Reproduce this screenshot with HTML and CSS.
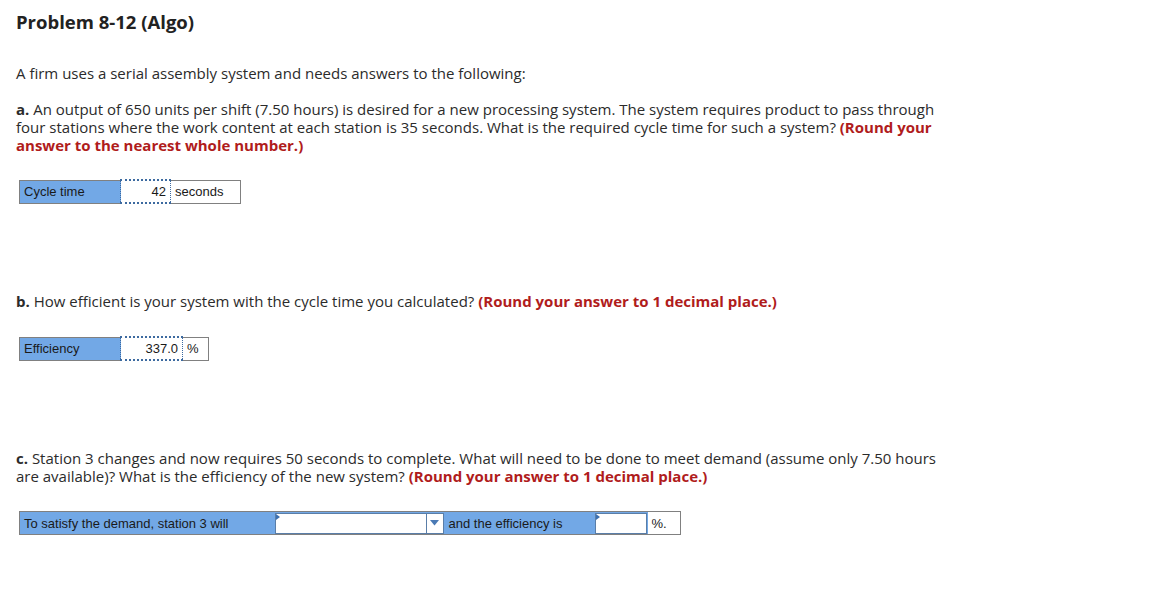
FILE: index.html
```html
<!DOCTYPE html>
<html>
<head>
<meta charset="utf-8">
<link rel="stylesheet" href="styles.css">
</head>
<body>
<div class="page">
  <h1 class="title">Problem 8-12 (Algo)</h1>
  <p class="intro">A firm uses a serial assembly system and needs answers to the following:</p>
  <p class="q q-a"><b>a.</b> An output of 650 units per shift (7.50 hours) is desired for a new processing system. The system requires product to pass through four stations where the work content at each station is 35 seconds. What is the required cycle time for such a system? <span class="hint">(Round your answer to the nearest whole number.)</span></p>
  <table class="ans ans-a">
    <tr>
      <td class="lbl w-cycle">Cycle time</td>
      <td class="val w-val42">42</td>
      <td class="unit w-sec">seconds</td>
    </tr>
  </table>
  <p class="q q-b"><b>b.</b> How efficient is your system with the cycle time you calculated? <span class="hint">(Round your answer to 1 decimal place.)</span></p>
  <table class="ans ans-b">
    <tr>
      <td class="lbl w-cycle">Efficiency</td>
      <td class="val w-val337">337.0</td>
      <td class="unit w-pct">%</td>
    </tr>
  </table>
  <p class="q q-c"><b>c.</b> Station 3 changes and now requires 50 seconds to complete. What will need to be done to meet demand (assume only 7.50 hours are available)? What is the efficiency of the new system? <span class="hint">(Round your answer to 1 decimal place.)</span></p>
  <table class="ans ans-c">
    <tr>
      <td class="lbl w-sat">To satisfy the demand, station 3 will</td>
      <td class="sel w-sel"><div class="sel-box"><span class="flag"></span><span class="arrow"><svg width="9" height="6" viewBox="0 0 9 6"><path d="M0 0 H9 L4.5 5.5 Z" fill="#4a7ab5"/></svg></span></div></td>
      <td class="lbl w-and">and the efficiency is</td>
      <td class="inp w-inp"><div class="inp-box"><span class="flag"></span></div></td>
      <td class="unit w-pct2">%.</td>
    </tr>
  </table>
</div>
</body>
</html>
```
FILE: styles.css
```css
html, body { margin: 0; padding: 0; background: #fff; }
.page {
  padding: 0 16px;
  font-family: "Open Sans", "Noto Sans", sans-serif;
  color: #2b2b2b;
}
.title {
  margin: 0;
  padding-top: 10px;
  font-size: 18.5px;
  line-height: 24px;
  font-weight: 700;
  color: #222;
}
.intro {
  margin: 30px 0 0;
  font-size: 15px;
  line-height: 18px;
}
.q {
  margin: 0;
  font-size: 15px;
  line-height: 18px;
  max-width: 930px;
}
.q b { font-weight: 700; }
.q-a { margin-top: 18px; }
.q-b { margin-top: 88px; }
.q-c { margin-top: 88px; }
.hint { color: #b01c1c; font-weight: 700; }

.ans {
  border-collapse: collapse;
  margin-left: 3px;
  font-family: "Liberation Sans", Arial, sans-serif;
  font-size: 13px;
  color: #1a1a1a;
}
.ans td {
  border-top: 1px solid #808080;
  border-bottom: 1px solid #808080;
  height: 23px;
  padding: 0 4px;
  line-height: 21px;
  box-sizing: border-box;
}
.ans td:first-child { border-left: 1px solid #808080; }
.ans td:last-child { border-right: 1px solid #808080; }
.ans-a { margin-top: 25px; }
.ans-b { margin-top: 26px; }
.ans-c { margin-top: 26px; }
.lbl { background: #72a8e6; }
.val {
  background: #fff;
  text-align: right;
  border-left: 1px dotted #3d6aa0 !important;
  border-right: 1px dotted #3d6aa0 !important;
  border-top: 2px dotted #3d6aa0 !important;
  border-bottom: 2px dotted #3d6aa0 !important;
}
.unit { background: #fff; }
.w-cycle { width: 101px; min-width: 101px; }
.w-val42 { width: 50px; min-width: 50px; }
.w-sec { width: 70px; min-width: 70px; }
.w-val337 { width: 62px; min-width: 62px; }
.w-pct { width: 26px; min-width: 26px; }
.w-sat { width: 254px; min-width: 254px; }
.w-sel { width: 171px; min-width: 171px; padding: 0 !important; background: #72a8e6; }
.w-and { width: 150px; min-width: 150px; }
.w-inp { width: 53px; min-width: 53px; padding: 0 !important; background: #72a8e6; }
.w-pct2 { width: 33px; min-width: 33px; }
.sel-box, .inp-box {
  position: relative;
  height: 21px;
  margin: 0 1px;
  background: #fff;
  border: 1px solid #5a7ea8;
  box-sizing: border-box;
}
.sel-box { display: flex; justify-content: flex-end; }
.inp-box { margin: 0 1px 0 0; }
.flag {
  position: absolute;
  left: 0;
  top: 0;
  width: 0;
  height: 0;
  border-top: 3px solid transparent;
  border-bottom: 3px solid transparent;
  border-left: 4px solid #3b6fb0;
}
.arrow {
  width: 16px;
  border-left: 1px solid #5a7ea8;
  display: flex;
  align-items: center;
  justify-content: center;
}
```
